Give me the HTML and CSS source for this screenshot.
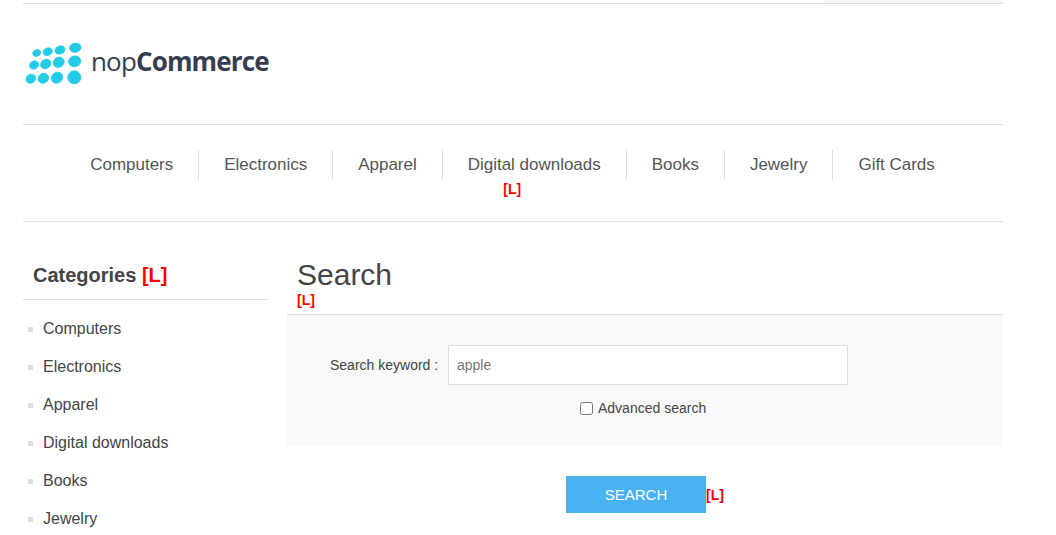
FILE: index.html
```html
<!DOCTYPE html>
<html lang="en">
<head>
    <meta charset="UTF-8">
    <meta name="viewport" content="width=device-width, initial-scale=1.0">
    <title>Search</title>
    <link rel="stylesheet" href="styles.css">
</head>
<body>
    <div class="page">
        <div class="header-links"><div class="header-links-tab"></div></div>

        <div class="logo-row">
            <svg class="logo-mark" width="58" height="43" viewBox="0 0 58 43">
                <g fill="#22cbe6" stroke="#22cbe6" stroke-width="0.7">
                    <ellipse cx="10.700" cy="10" rx="4" ry="3.300" transform="rotate(-20 10.700 10)"/>
                    <ellipse cx="21.700" cy="8.700" rx="4.800" ry="3.700" transform="rotate(-20 21.700 8.700)"/>
                    <ellipse cx="34" cy="7" rx="5.200" ry="4" transform="rotate(-20 34 7)"/>
                    <ellipse cx="49.300" cy="4.700" rx="5.800" ry="4.700" transform="rotate(-10 49.300 4.700)"/>
                    <ellipse cx="8" cy="22" rx="4.700" ry="4" transform="rotate(-30 8 22)"/>
                    <ellipse cx="19.700" cy="21" rx="5.300" ry="4.500" transform="rotate(-30 19.700 21)"/>
                    <ellipse cx="32.700" cy="19.300" rx="5.700" ry="5" transform="rotate(-25 32.700 19.300)"/>
                    <ellipse cx="48.700" cy="18.300" rx="6.200" ry="5.300" transform="rotate(-10 48.700 18.300)"/>
                    <ellipse cx="4.700" cy="35.700" rx="5" ry="4.400" transform="rotate(-30 4.700 35.700)"/>
                    <ellipse cx="17.300" cy="35.300" rx="5.400" ry="4.900" transform="rotate(-35 17.300 35.300)"/>
                    <ellipse cx="31" cy="34.700" rx="6" ry="5.300" transform="rotate(-35 31 34.700)"/>
                    <circle cx="48.300" cy="34.300" r="6.600"/>
                </g>
            </svg>
            <span class="logo-text">nop<b>Commerce</b></span>
        </div>

        <ul class="top-menu">
            <li><a href="#">Computers</a></li>
            <li><a href="#">Electronics</a></li>
            <li><a href="#">Apparel</a></li>
            <li><a href="#">Digital downloads</a><span class="res-key">[L]</span></li>
            <li><a href="#">Books</a></li>
            <li><a href="#">Jewelry</a></li>
            <li><a href="#">Gift Cards</a></li>
        </ul>

        <div class="columns">
            <div class="side">
                <div class="side-title">Categories <span class="side-key">[L]</span></div>
                <ul class="side-list">
                    <li>Computers</li>
                    <li>Electronics</li>
                    <li>Apparel</li>
                    <li>Digital downloads</li>
                    <li>Books</li>
                    <li>Jewelry</li>
                </ul>
            </div>

            <div class="main">
                <div class="page-title">
                    <h1>Search</h1>
                    <span class="res-key">[L]</span>
                </div>
                <div class="search-panel">
                    <div class="keyword-row">
                        <label class="keyword-label" for="q">Search keyword :</label>
                        <input class="keyword-input" id="q" type="text" value="apple">
                    </div>
                    <div class="advanced-row">
                        <input class="advanced-check" id="adv" type="checkbox">
                        <label for="adv">Advanced search</label>
                    </div>
                </div>
                <div class="button-row">
                    <button class="search-button">SEARCH</button><span class="res-key">[L]</span>
                </div>
            </div>
        </div>
    </div>
</body>
</html>
```

FILE: styles.css
```css
html, body {
    height: 100%;
    overflow: hidden;
}
body {
    margin: 0;
    background: #fff;
    color: #444;
    font-family: "Liberation Sans", Arial, sans-serif;
}
ul {
    list-style: none;
    margin: 0;
    padding: 0;
}
.page {
    width: 980px;
    margin-left: 23px;
}
.res-key {
    display: block;
    color: #f00;
    font-size: 14px;
    font-weight: bold;
    line-height: 16px;
}

/* Header */
.header-links {
    height: 3px;
    border-bottom: 1px solid #ddd;
    display: flex;
    justify-content: flex-end;
}
.header-links-tab {
    width: 179px;
    background: #f6f6f6;
}
.logo-row {
    height: 81px;
    padding: 39px 0 0 3px;
    border-bottom: 1px solid #ddd;
    display: flex;
    align-items: flex-start;
}
.logo-mark {
    flex: none;
}
.logo-text {
    margin-left: 7px;
    font-family: "Open Sans", sans-serif;
    font-size: 26px;
    line-height: 36px;
    letter-spacing: -0.85px;
    color: #353e50;
}
.logo-text b {
    font-weight: 700;
}

/* Top menu */
.top-menu {
    height: 96px;
    padding-right: 1px;
    border-bottom: 1px solid #ddd;
    display: flex;
    justify-content: center;
}
.top-menu li {
    height: 30px;
    margin-top: 25px;
    padding: 0 25px;
    border-left: 1px solid #ddd;
    font-size: 17px;
    line-height: 30px;
    letter-spacing: -0.015px;
    text-align: center;
}
.top-menu li:first-child {
    border-left: none;
}
.top-menu a {
    color: #555;
    text-decoration: none;
}
.top-menu .res-key {
    margin-top: 1px;
    padding-right: 44px;
    letter-spacing: 0;
}

/* Columns */
.columns {
    display: flex;
    justify-content: space-between;
    padding-top: 33px;
}
.side {
    width: 245px;
}
.side-title {
    height: 44px;
    padding-left: 10px;
    border-bottom: 1px solid #ddd;
    font-size: 20px;
    font-weight: bold;
    line-height: 41px;
}
.side-key {
    color: #f00;
}
.side-list {
    padding-top: 10px;
}
.side-list li {
    position: relative;
    padding-left: 20px;
    font-size: 16px;
    line-height: 38px;
}
.side-list li::before {
    content: "";
    position: absolute;
    left: 5px;
    top: 17px;
    width: 5px;
    height: 5px;
    background: #ddd;
}

/* Search */
.main {
    width: 716px;
}
.page-title {
    height: 59px;
    padding: 0 10px;
    border-bottom: 1px solid #ddd;
}
.page-title h1 {
    margin: 0;
    padding-top: 2px;
    font-size: 30px;
    font-weight: normal;
    line-height: 36px;
}
.page-title .res-key {
    margin-top: -1px;
}
.search-panel {
    height: 131px;
    padding-top: 30px;
    box-sizing: border-box;
    background: #f9f9f9;
    font-size: 14px;
}
.keyword-row {
    display: flex;
    align-items: center;
    padding-left: 43px;
}
.keyword-label {
    width: 108px;
    margin-right: 10px;
    white-space: nowrap;
}
.keyword-input {
    width: 400px;
    height: 40px;
    box-sizing: border-box;
    padding: 0 8px;
    border: 1px solid #ddd;
    border-radius: 0;
    background: #fff;
    color: #777;
    font-family: inherit;
    font-size: 14px;
}
.advanced-row {
    display: flex;
    align-items: center;
    margin-top: 15px;
    padding-left: 293px;
    line-height: 16px;
}
.advanced-check {
    width: 13px;
    height: 13px;
    margin: 0 5px 0 0;
}
.button-row {
    display: flex;
    align-items: center;
    margin-top: 30px;
    padding-left: 279px;
}
.search-button {
    width: 140px;
    height: 37px;
    border: none;
    background: #4ab2f1;
    color: #fff;
    font-family: inherit;
    font-size: 15px;
}
```
